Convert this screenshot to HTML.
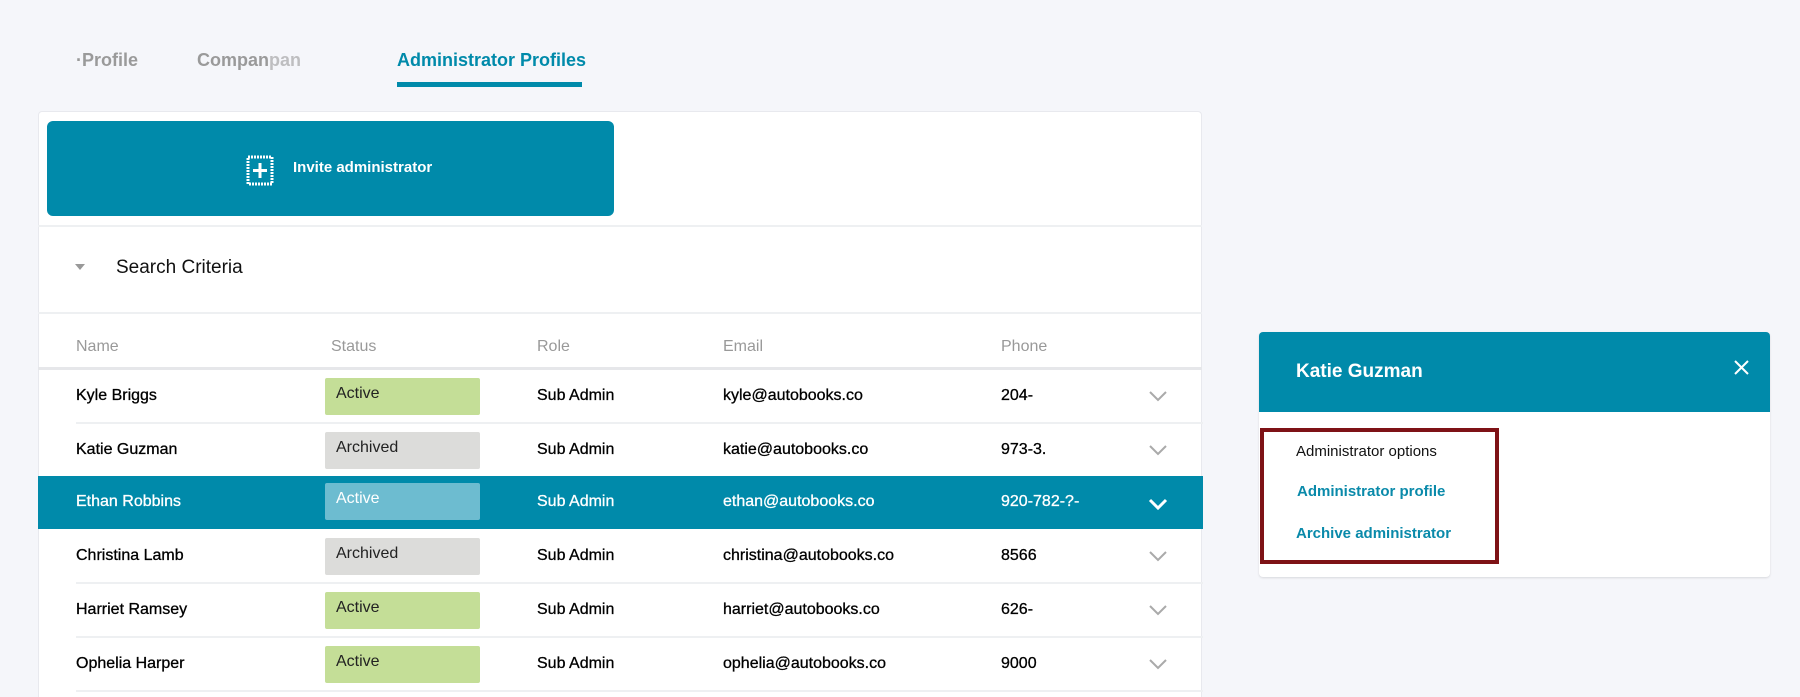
<!DOCTYPE html>
<html><head><meta charset="utf-8"><style>
*{margin:0;padding:0;box-sizing:border-box}
html{width:1800px;height:697px;overflow:hidden}
body{width:1800px;height:697px;background:#f5f6fa;font-family:"Liberation Sans",sans-serif;position:relative;overflow:hidden;color:#1a1a1a}
.a{position:absolute;white-space:nowrap}
.tab{font-size:18px;font-weight:700;color:#9a9a9a;top:50px}
.card{position:absolute;left:38px;top:111px;width:1164px;height:586px;background:#fff;border:1px solid #e8e9ee;border-bottom:none;border-radius:4px 4px 0 0}
.btn{position:absolute;left:47px;top:121px;width:567px;height:95px;background:#008aaa;border-radius:6px}
.hdr{font-size:16px;color:#999;top:338px}
.row{position:absolute;left:38px;width:1165px;height:54px}
.row .sep{position:absolute;left:38px;right:0;bottom:0;height:2px;background:#eef0f2}
.row span{position:absolute;top:17px;font-size:16px;white-space:nowrap;color:#000;-webkit-text-stroke:0.3px currentColor}
.badge{position:absolute;left:287px;top:8px;width:155px;height:37px;border-radius:2px}
.badge i{font-style:normal;position:absolute;left:11px;top:7px;font-size:16px;color:#222}
.chev{position:absolute;left:1110px;top:20px}
.sel{background:#008aaa;color:#fff}
.sel span{color:#fff}
</style></head><body>
<div class="a tab" style="left:76px">·Profile</div>
<div class="a tab" style="left:197px">Compan<span style="opacity:.6">pan</span></div>
<div class="a tab" style="left:397px;color:#008aaa">Administrator Profiles</div>
<div class="a" style="left:397px;top:82px;width:185px;height:5px;background:#008aaa"></div>
<div class="card"></div>
<div class="btn"></div>
<svg class="a" style="left:246px;top:155px" width="28" height="31" viewBox="0 0 28 31"><rect x="2" y="2" width="24" height="27" fill="none" stroke="#fff" stroke-width="3" stroke-dasharray="2 1"/><path d="M14 8v15M7 15.5h14" stroke="#fff" stroke-width="3"/></svg>
<div class="a" style="left:293px;top:159px;color:#fff;font-size:15px;font-weight:700">Invite administrator</div>
<div class="a" style="left:38px;top:225px;width:1164px;height:2px;background:#eef0f2"></div>
<div class="a" style="left:75px;top:264px;width:0;height:0;border-left:5px solid transparent;border-right:5px solid transparent;border-top:6px solid #999"></div>
<div class="a" style="left:116px;top:257px;font-size:19px;color:#111">Search Criteria</div>
<div class="a" style="left:38px;top:312px;width:1164px;height:2px;background:#eef0f2"></div>
<div class="a hdr" style="left:76px">Name</div>
<div class="a hdr" style="left:331px">Status</div>
<div class="a hdr" style="left:537px">Role</div>
<div class="a hdr" style="left:723px">Email</div>
<div class="a hdr" style="left:1001px">Phone</div>
<div class="a" style="left:38px;top:367px;width:1164px;height:3px;background:#e6e7ea"></div>

<div class="row" style="top:370px"><span style="left:38px">Kyle Briggs</span><div class="badge" style="background:#c4de97"><i>Active</i></div><span style="left:499px">Sub Admin</span><span style="left:685px">kyle@autobooks.co</span><span style="left:963px">204-</span><svg class="chev" width="20" height="12"><path d="M2 2l8 8 8-8" fill="none" stroke="#aaa" stroke-width="2"/></svg><div class="sep"></div></div>
<div class="row" style="top:424px"><span style="left:38px">Katie Guzman</span><div class="badge" style="background:#dcdcda"><i>Archived</i></div><span style="left:499px">Sub Admin</span><span style="left:685px">katie@autobooks.co</span><span style="left:963px">973-3.</span><svg class="chev" width="20" height="12"><path d="M2 2l8 8 8-8" fill="none" stroke="#aaa" stroke-width="2"/></svg></div>
<div class="row sel" style="top:476px;height:53px"><span style="left:38px">Ethan Robbins</span><div class="badge" style="background:#6dbcd0;top:7px"><i style="color:#fff">Active</i></div><span style="left:499px">Sub Admin</span><span style="left:685px">ethan@autobooks.co</span><span style="left:963px">920-782-?-</span><svg class="chev" width="20" height="12" style="top:22px"><path d="M2 2l8 8 8-8" fill="none" stroke="#fff" stroke-width="3"/></svg></div>
<div class="row" style="top:530px"><span style="left:38px">Christina Lamb</span><div class="badge" style="background:#dcdcda"><i>Archived</i></div><span style="left:499px">Sub Admin</span><span style="left:685px">christina@autobooks.co</span><span style="left:963px">8566</span><svg class="chev" width="20" height="12"><path d="M2 2l8 8 8-8" fill="none" stroke="#aaa" stroke-width="2"/></svg><div class="sep"></div></div>
<div class="row" style="top:584px"><span style="left:38px">Harriet Ramsey</span><div class="badge" style="background:#c4de97"><i>Active</i></div><span style="left:499px">Sub Admin</span><span style="left:685px">harriet@autobooks.co</span><span style="left:963px">626-</span><svg class="chev" width="20" height="12"><path d="M2 2l8 8 8-8" fill="none" stroke="#aaa" stroke-width="2"/></svg><div class="sep"></div></div>
<div class="row" style="top:638px"><span style="left:38px">Ophelia Harper</span><div class="badge" style="background:#c4de97"><i>Active</i></div><span style="left:499px">Sub Admin</span><span style="left:685px">ophelia@autobooks.co</span><span style="left:963px">9000</span><svg class="chev" width="20" height="12"><path d="M2 2l8 8 8-8" fill="none" stroke="#aaa" stroke-width="2"/></svg><div class="sep"></div></div>

<div class="a" style="left:1259px;top:332px;width:511px;height:245px;background:#fff;border-radius:4px;box-shadow:0 1px 2px rgba(0,0,0,.12)"></div>
<div class="a" style="left:1259px;top:332px;width:511px;height:80px;background:#008aaa;border-radius:4px 4px 0 0"></div>
<div class="a" style="left:1296px;top:361px;color:#fff;font-size:19px;font-weight:700">Katie Guzman</div>
<svg class="a" style="left:1734px;top:360px" width="15" height="15"><path d="M1 1l13 13M14 1L1 14" stroke="#fff" stroke-width="2"/></svg>
<div class="a" style="left:1260px;top:428px;width:239px;height:136px;border:4px solid #7e1216;background:#fff"></div>
<div class="a" style="left:1296px;top:443px;font-size:15px;color:#111">Administrator options</div>
<div class="a" style="left:1297px;top:483px;font-size:15px;color:#0a8aaa;font-weight:700">Administrator profile</div>
<div class="a" style="left:1296px;top:525px;font-size:15px;color:#0a8aaa;font-weight:700">Archive administrator</div>
</body></html>
